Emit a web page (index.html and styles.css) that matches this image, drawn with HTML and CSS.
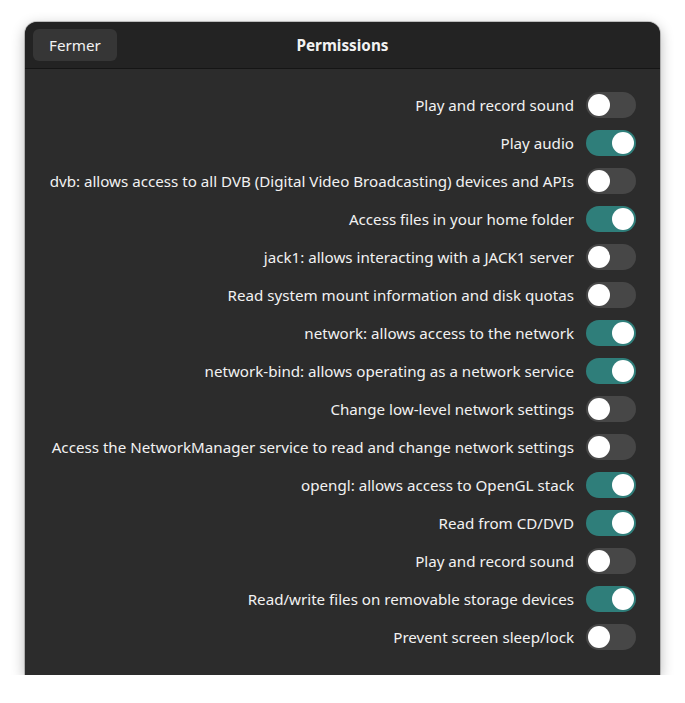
FILE: index.html
```html
<!DOCTYPE html>
<html lang="fr">
<head>
<meta charset="utf-8">
<title>Permissions</title>
<link rel="stylesheet" href="styles.css">
</head>
<body>
<div class="window">
  <header class="headerbar">
    <button class="btn">Fermer</button>
    <div class="title">Permissions</div>
  </header>
  <main class="list">
    <div class="row"><span class="label">Play and record sound</span><span class="switch"></span></div>
    <div class="row"><span class="label">Play audio</span><span class="switch on"></span></div>
    <div class="row"><span class="label">dvb: allows access to all DVB (Digital Video Broadcasting) devices and APIs</span><span class="switch"></span></div>
    <div class="row"><span class="label">Access files in your home folder</span><span class="switch on"></span></div>
    <div class="row"><span class="label">jack1: allows interacting with a JACK1 server</span><span class="switch"></span></div>
    <div class="row"><span class="label">Read system mount information and disk quotas</span><span class="switch"></span></div>
    <div class="row"><span class="label">network: allows access to the network</span><span class="switch on"></span></div>
    <div class="row"><span class="label">network-bind: allows operating as a network service</span><span class="switch on"></span></div>
    <div class="row"><span class="label">Change low-level network settings</span><span class="switch"></span></div>
    <div class="row"><span class="label">Access the NetworkManager service to read and change network settings</span><span class="switch"></span></div>
    <div class="row"><span class="label">opengl: allows access to OpenGL stack</span><span class="switch on"></span></div>
    <div class="row"><span class="label">Read from CD/DVD</span><span class="switch on"></span></div>
    <div class="row"><span class="label">Play and record sound</span><span class="switch"></span></div>
    <div class="row"><span class="label">Read/write files on removable storage devices</span><span class="switch on"></span></div>
    <div class="row"><span class="label">Prevent screen sleep/lock</span><span class="switch"></span></div>
  </main>
</div>
</body>
</html>
```
FILE: styles.css
```css
html, body {
  margin: 0;
  padding: 0;
  background: #ffffff;
}
body {
  padding: 22px 0 0 25px;
  font-family: "Noto Sans", "DejaVu Sans", sans-serif;
}
.window {
  width: 635px;
  height: 653px;
  background: #2c2c2c;
  border-radius: 12px 12px 0 0;
  box-shadow: 0 4px 14px rgba(0,0,0,0.3), 0 0 0 1px rgba(0,0,0,0.2);
  overflow: hidden;
  color: #f2f2f2;
}
.headerbar {
  position: relative;
  height: 46px;
  background: #232323;
  border-bottom: 1px solid #151515;
  display: flex;
  align-items: center;
  padding: 0 8px;
  box-sizing: content-box;
}
.btn {
  width: 84px;
  height: 32px;
  background: #363636;
  border: none;
  border-radius: 6px;
  color: #f2f2f2;
  font-family: inherit;
  font-size: 15.2px;
  padding: 0;
}
.title {
  position: absolute;
  left: 0;
  right: 0;
  top: 0;
  bottom: 0;
  display: flex;
  align-items: center;
  justify-content: center;
  font-weight: bold;
  font-size: 15.3px;
  pointer-events: none;
}
.list {
  padding: 17px 24px 19px 24px;
  display: flex;
  flex-direction: column;
}
.row {
  height: 38px;
  display: flex;
  align-items: center;
  justify-content: flex-end;
  gap: 12px;
}
.label {
  font-size: 15.15px;
  white-space: nowrap;
}
.switch {
  position: relative;
  flex: none;
  width: 50px;
  height: 26px;
  border-radius: 13px;
  background: #474747;
}
.switch::after {
  content: "";
  position: absolute;
  top: 2px;
  left: 2px;
  width: 22px;
  height: 22px;
  border-radius: 50%;
  background: #ffffff;
}
.switch.on {
  background: #2f7e7a;
}
.switch.on::after {
  left: 26px;
}
```
